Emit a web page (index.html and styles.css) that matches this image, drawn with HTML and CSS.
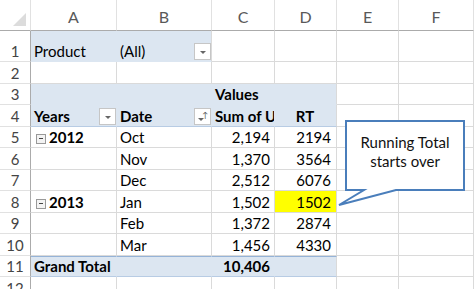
FILE: index.html
```html
<!DOCTYPE html>
<html lang="en">
<head>
    <meta charset="UTF-8">
    <title>Running Total Pivot</title>
    <link rel="stylesheet" href="styles.css">
</head>
<body>
<div class="sheet">
    <table class="grid">
        <colgroup>
            <col class="c-hdr"><col class="c-a"><col class="c-b"><col class="c-c"><col class="c-d"><col class="c-e"><col class="c-f">
        </colgroup>
        <!-- column letters -->
        <tr class="colhead">
            <th class="corner"><span class="tri"></span></th>
            <th>A</th><th>B</th><th>C</th><th>D</th><th>E</th><th>F</th>
        </tr>
        <tr class="tall">
            <th class="rowno">1</th>
            <td class="pv join">Product</td>
            <td class="pv">(All)<span class="dd"><i class="arr"></i></span></td>
            <td></td><td></td><td></td><td></td>
        </tr>
        <tr>
            <th class="rowno">2</th>
            <td></td><td></td><td></td><td></td><td></td><td></td>
        </tr>
        <tr>
            <th class="rowno">3</th>
            <td class="pv join"></td><td class="pv join"></td>
            <td class="pv join b over">Values</td><td class="pv"></td>
            <td></td><td></td>
        </tr>
        <!-- pivot header -->
        <tr class="pv-head">
            <th class="rowno">4</th>
            <td class="pv join b">Years<span class="dd"><i class="arr"></i></span></td>
            <td class="pv join b">Date<span class="dd sort"><i class="arr"></i><i class="up">&#8593;</i></span></td>
            <td class="pv join b">Sum of Units</td>
            <td class="pv b mid">RT</td>
            <td></td><td></td>
        </tr>
        <tr>
            <th class="rowno">5</th>
            <td class="b"><span class="minus"></span>2012</td><td>Oct</td><td class="num">2,194</td><td class="num rt">2194</td><td></td><td></td>
        </tr>
        <tr>
            <th class="rowno">6</th>
            <td></td><td>Nov</td><td class="num">1,370</td><td class="num rt">3564</td><td></td><td></td>
        </tr>
        <tr>
            <th class="rowno">7</th>
            <td></td><td>Dec</td><td class="num">2,512</td><td class="num rt">6076</td><td></td><td></td>
        </tr>
        <tr>
            <th class="rowno">8</th>
            <td class="b"><span class="minus"></span>2013</td><td>Jan</td><td class="num">1,502</td><td class="num rt hl">1502</td><td></td><td></td>
        </tr>
        <tr>
            <th class="rowno">9</th>
            <td></td><td>Feb</td><td class="num">1,372</td><td class="num rt">2874</td><td></td><td></td>
        </tr>
        <tr>
            <th class="rowno">10</th>
            <td></td><td>Mar</td><td class="num">1,456</td><td class="num rt">4330</td><td></td><td></td>
        </tr>
        <tr class="total">
            <th class="rowno">11</th>
            <td class="pv join b over">Grand Total</td><td class="pv join"></td>
            <td class="pv join b num">10,406</td><td class="pv"></td>
            <td></td><td></td>
        </tr>
        <tr>
            <th class="rowno">12</th>
            <td></td><td></td><td></td><td></td><td></td><td></td>
        </tr>
    </table>

    <!-- callout bubble -->
    <div class="callout">
        <svg class="bubble" width="140" height="100" viewBox="0 0 140 100">
            <path d="M10 2 H128 V71 H60 L3 86 L28 71 H10 Z" fill="#fff" stroke="#4a7ebb" stroke-width="2" stroke-linejoin="miter"/>
        </svg>
        <p class="callout-text">Running Total<br>starts over</p>
    </div>
</div>
</body>
</html>
```

FILE: styles.css
```css
body {
    margin: 0;
    background: #fff;
    font-family: Lato, "Open Sans", sans-serif;
    color: #000;
    overflow: hidden;
}

.sheet {
    position: relative;
    width: 474px;
    height: 289px;
    overflow: hidden;
}

.grid {
    border-collapse: separate;
    border-spacing: 0;
    table-layout: fixed;
    width: 474px;
    font-size: 15px;
}

.c-hdr { width: 31px; }
.c-a { width: 86px; }
.c-b { width: 95px; }
.c-c { width: 63px; }
.c-d { width: 62px; }
.c-e { width: 62px; }
.c-f { width: 75px; }

.grid tr { height: 21.5px; }
.grid tr.colhead { height: 31px; }
.grid tr.tall { height: 31px; }

.grid td,
.grid th {
    box-sizing: border-box;
    border-right: 1px solid #dadada;
    border-bottom: 1px solid #dadada;
    padding: 0 4px 1px 3px;
    line-height: 17px;
    vertical-align: bottom;
    white-space: nowrap;
    overflow: hidden;
    text-align: left;
    font-weight: normal;
    position: relative;
}

/* column letters */
.colhead th {
    text-align: center;
    color: #595959;
    font-size: 16px;
    vertical-align: middle;
    padding: 2px 0 0;
    border-bottom: 1px solid #ababab;
    border-right: 1px solid #e1e1e1;
}

.corner .tri {
    position: absolute;
    right: 4px;
    bottom: 4px;
    width: 0;
    height: 0;
    border-left: 13px solid transparent;
    border-bottom: 13px solid #dcdcdc;
}

/* row numbers */
.rowno {
    text-align: center !important;
    color: #444;
    font-size: 15px;
    padding: 0 0 1px !important;
    border-right: 1px solid #ababab !important;
    border-bottom: 1px solid #e1e1e1 !important;
}

/* pivot styles */
.pv {
    background: #dce6f1;
    border-bottom-color: #dce6f1 !important;
}

.pv.join {
    border-right-color: #dce6f1;
}

.pv-head .pv {
    border-bottom-color: #b8cce4 !important;
}

.total .pv {
    border-top: 1px solid #95b3d7;
    border-bottom-color: #b8cce4 !important;
}

.grid .b { font-weight: bold; }
.grid .over { overflow: visible; }
.grid .mid { text-align: center; }
.grid .num { text-align: right; }
.grid .hl { background: #ffff00; }

.grid td.rt { padding-right: 5px; }

/* filter buttons */
.dd {
    position: absolute;
    right: 0;
    bottom: 1px;
    width: 17px;
    height: 17px;
    box-sizing: border-box;
    background: #fff;
    border: 1px solid #c6c6c6;
}

.dd .arr {
    position: absolute;
    left: 5px;
    top: 7px;
    width: 0;
    height: 0;
    border-left: 3px solid transparent;
    border-right: 3px solid transparent;
    border-top: 3px solid #666;
}

.dd.sort .arr {
    left: 3px;
    top: 9px;
}

.dd.sort .up {
    position: absolute;
    right: 2px;
    top: 1px;
    font-style: normal;
    font-weight: normal;
    font-size: 8px;
    line-height: 10px;
    color: #555;
}

.minus {
    display: inline-block;
    position: relative;
    width: 10px;
    height: 10px;
    box-sizing: border-box;
    border: 1px solid #999;
    background: #f3f3f3;
    margin: 0 3px 0 2px;
    vertical-align: -1px;
}

.minus::after {
    content: "";
    position: absolute;
    left: 2px;
    right: 2px;
    top: 3px;
    height: 1px;
    background: #444;
}

/* callout */
.callout {
    position: absolute;
    left: 336px;
    top: 119px;
    width: 140px;
    height: 100px;
}

.bubble {
    position: absolute;
    left: 0;
    top: 0;
}

.callout-text {
    position: absolute;
    left: 10px;
    top: 14px;
    width: 118px;
    margin: 0;
    text-align: center;
    font-size: 15px;
    line-height: 19px;
    color: #111;
}
```
